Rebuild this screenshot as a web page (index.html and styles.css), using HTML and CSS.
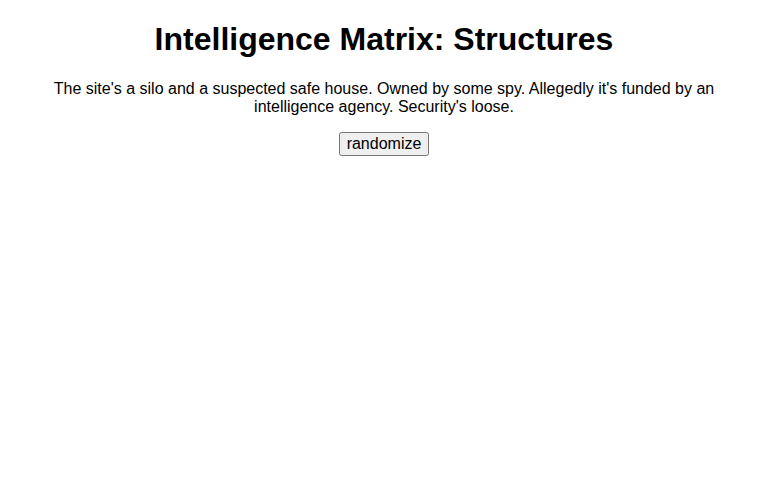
FILE: index.html
```html
<!DOCTYPE html>
<html lang="en">
<head>
  <meta charset="UTF-8">
  <meta name="viewport" content="width=device-width, initial-scale=1.0">
  <title>Intelligence Matrix</title>
  <link rel="stylesheet" href="styles.css">
</head>
<body>
  <h1 id="title">Intelligence Matrix: Structures</h1>
  <p id="description" class="description">The site's a silo and a suspected safe house. Owned by some spy. Allegedly it's funded by an intelligence agency. Security's loose.</p>
  <button id="randomizeButton">randomize</button>
</body>
</html>
```

FILE: styles.css
```css
body {
  margin: 0;
  text-align: center;
  font-family: "Liberation Sans", Arial, sans-serif;
  color: black;
  background: white;
}

h1 {
  font-size: 2em;
  margin: 0.67em 0;
}

.description {
  padding: 0 40px;
  margin: 1em 0;
}

#randomizeButton {
  font-family: "Liberation Sans", Arial, sans-serif;
  font-size: 16px;
}
```
